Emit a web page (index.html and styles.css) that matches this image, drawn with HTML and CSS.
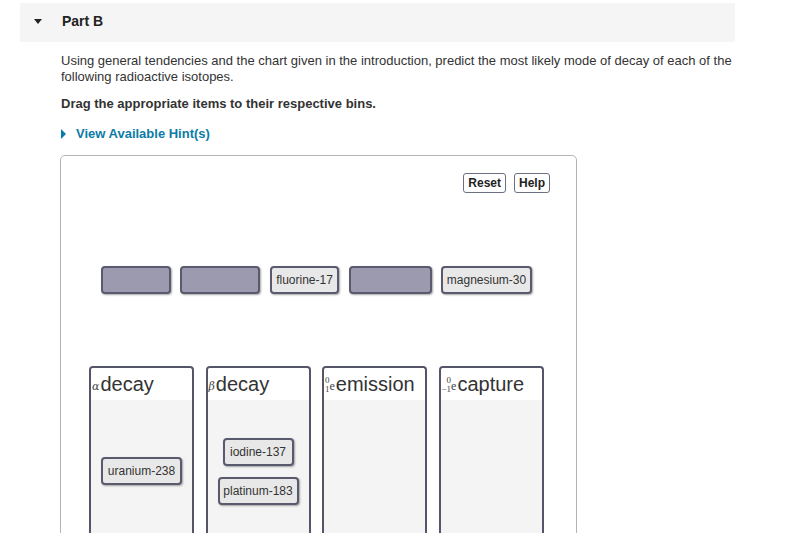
FILE: index.html
```html
<!DOCTYPE html>
<html>
<head>
<meta charset="utf-8">
<link rel="stylesheet" href="styles.css">
</head>
<body>
<div class="part-header">
  <span class="caret"></span>
  <span class="part-title">Part B</span>
</div>
<div class="content">
  <p class="question">Using general tendencies and the chart given in the introduction, predict the most likely mode of decay of each of the following radioactive isotopes.</p>
  <p class="instr">Drag the appropriate items to their respective bins.</p>
  <div class="hint"><span class="hint-caret"></span>View Available Hint(s)</div>
  <div class="board">
    <div class="toolbar">
      <button class="btn">Reset</button>
      <button class="btn">Help</button>
    </div>
    <div class="tokens">
      <div class="slot s1"></div>
      <div class="slot s2"></div>
      <div class="token t-fl">fluorine-17</div>
      <div class="slot s3"></div>
      <div class="token t-mg">magnesium-30</div>
    </div>
    <div class="bins">
      <div class="bin">
        <div class="bin-head"><span class="sym greek">α</span><span class="lbl">decay</span></div>
        <div class="bin-body">
          <div class="token t-u">uranium-238</div>
        </div>
      </div>
      <div class="bin">
        <div class="bin-head"><span class="sym greek">β</span><span class="lbl">decay</span></div>
        <div class="bin-body b2">
          <div class="token t-i">iodine-137</div>
          <div class="token t-pt">platinum-183</div>
        </div>
      </div>
      <div class="bin">
        <div class="bin-head"><span class="nuc"><span class="nuc-n"><span>0</span><span>1</span></span><span class="nuc-e">e</span></span><span class="lbl">emission</span></div>
        <div class="bin-body"></div>
      </div>
      <div class="bin">
        <div class="bin-head"><span class="nuc"><span class="nuc-n"><span>0</span><span>&minus;1</span></span><span class="nuc-e">e</span></span><span class="lbl">capture</span></div>
        <div class="bin-body"></div>
      </div>
    </div>
  </div>
</div>
</body>
</html>
```
FILE: styles.css
```css
html, body {
  margin: 0;
  padding: 0;
  background: #ffffff;
  font-family: "Liberation Sans", Arial, Helvetica, sans-serif;
  color: #333333;
  overflow: hidden;
}
.part-header {
  margin: 3px 0 0 20px;
  width: 715px;
  height: 39px;
  box-sizing: border-box;
  padding-bottom: 4px;
  background: #f5f5f5;
  display: flex;
  align-items: center;
}
.caret {
  width: 0;
  height: 0;
  border-left: 4px solid transparent;
  border-right: 4px solid transparent;
  border-top: 5px solid #222;
  margin-left: 14px;
  margin-top: 1px;
}
.part-title {
  margin-left: 20px;
  font-size: 14px;
  font-weight: bold;
  color: #222;
}
.content {
  padding-left: 61px;
}
.question {
  margin: 11px 0 0 0;
  font-size: 13px;
  line-height: 16px;
  width: 680px;
  color: #333;
}
.instr {
  margin: 11px 0 0 0;
  font-size: 13px;
  font-weight: bold;
  line-height: 16px;
}
.hint {
  margin-top: 14px;
  font-size: 13px;
  font-weight: bold;
  color: #0c7ba5;
  display: flex;
  align-items: center;
  line-height: 16px;
}
.hint-caret {
  width: 0;
  height: 0;
  border-top: 5px solid transparent;
  border-bottom: 5px solid transparent;
  border-left: 5px solid #0c7ba5;
  margin: 0 10px 0 0;
}
.board {
  margin-top: 13px;
  margin-left: -1px;
  width: 517px;
  height: 420px;
  border: 1px solid #b4b4b4;
  border-radius: 5px;
  box-sizing: border-box;
}
.toolbar {
  display: flex;
  justify-content: flex-end;
  gap: 8px;
  padding: 17px 26px 0 0;
}
.btn {
  font-family: "Liberation Sans", Arial, sans-serif;
  font-size: 12px;
  font-weight: bold;
  color: #222;
  background: #fff;
  border: 1px solid #6a7080;
  border-radius: 3px;
  height: 20px;
  padding: 0 4px;
  line-height: 18px;
}
.tokens {
  display: flex;
  align-items: center;
  padding: 73px 0 0 40px;
  height: 28px;
}
.slot {
  height: 28px;
  box-sizing: border-box;
  background: #9c9aae;
  border: 2px solid #5a5a6e;
  border-radius: 4px;
  box-shadow: 1px 1px 2px rgba(0,0,0,0.35);
}
.s1 { width: 70px; }
.s2 { width: 80px; margin-left: 9px; }
.s3 { width: 83px; margin-left: 10px; }
.token {
  height: 28px;
  box-sizing: border-box;
  background: #e8e8e8;
  border: 2px solid #5a5a6e;
  border-radius: 4px;
  box-shadow: 1px 1px 2px rgba(0,0,0,0.35);
  font-size: 12px;
  color: #333;
  display: flex;
  align-items: center;
  justify-content: center;
  white-space: nowrap;
}
.t-fl { width: 69px; margin-left: 10px; }
.t-mg { width: 91px; margin-left: 9px; }
.bins {
  display: flex;
  gap: 11.5px;
  padding: 72px 0 0 28px;
}
.bin {
  width: 105px;
  height: 200px;
  box-sizing: border-box;
  border: 2px solid #55556a;
  border-bottom: none;
  border-radius: 4px 4px 0 0;
  display: flex;
  flex-direction: column;
}
.bin-head {
  height: 32px;
  background: #fff;
  font-size: 20px;
  color: #333;
  display: flex;
  align-items: center;
  border-radius: 3px 3px 0 0;
  padding-left: 1px;
  white-space: nowrap;
}
.lbl { display: inline-block; }
.bin-body {
  flex: 1;
  background: #f4f4f4;
  display: flex;
  flex-direction: column;
  align-items: center;
  padding-top: 57px;
}
.bin-body.b2 {
  padding-top: 38px;
  gap: 11px;
}
.t-u { width: 81px; }
.t-i { width: 71px; }
.t-pt { width: 81px; }
.sym {
  font-family: "DejaVu Serif", "Liberation Serif", serif;
  font-style: italic;
  font-size: 11px;
  color: #444;
  margin-right: 1px;
  margin-top: 4px;
}
.nuc {
  display: inline-flex;
  align-items: center;
  font-family: "Liberation Serif", serif;
  color: #444;
  margin-right: 1px;
}
.nuc-n {
  display: inline-flex;
  flex-direction: column;
  align-items: flex-end;
  font-size: 9px;
  line-height: 9px;
  margin-top: 2px;
}
.nuc-e {
  font-size: 12px;
  line-height: 12px;
  margin-top: 3px;
}
```
